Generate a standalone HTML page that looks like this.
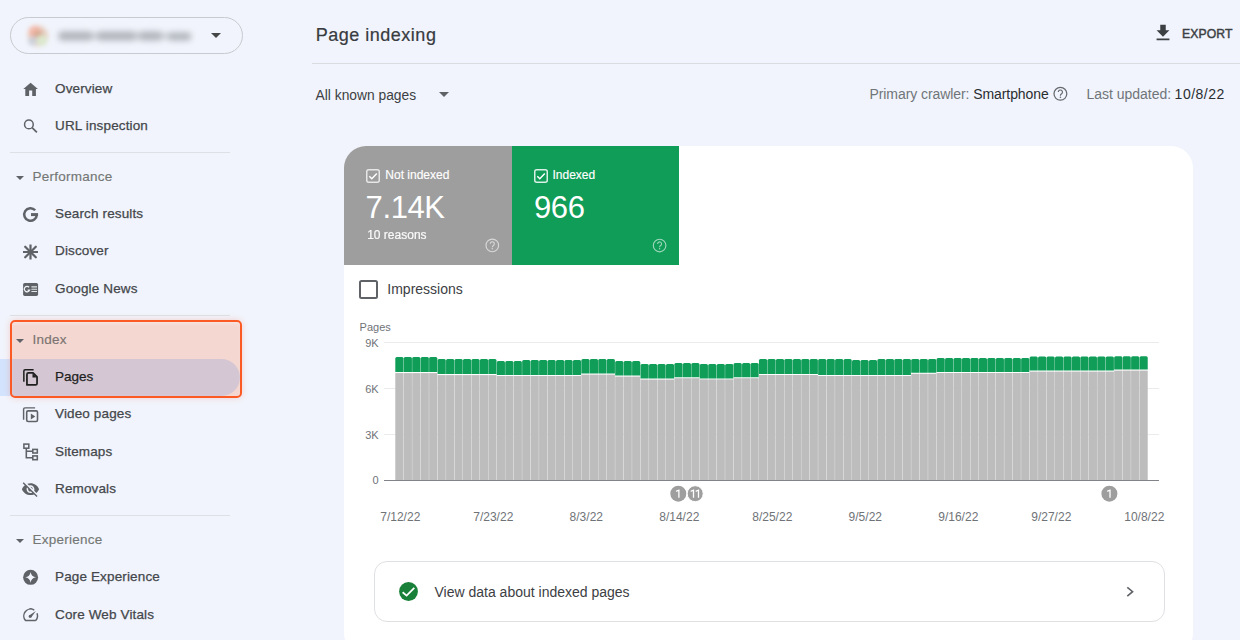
<!DOCTYPE html>
<html><head><meta charset="utf-8">
<style>
*{margin:0;padding:0;box-sizing:border-box}
html,body{width:1240px;height:640px;overflow:hidden;background:#f1f4fc;font-family:"Liberation Sans",sans-serif;position:relative}
.a{position:absolute;white-space:nowrap;line-height:1}
.nav{font-size:13.5px;color:#44474b;left:55px;letter-spacing:.14px;-webkit-text-stroke:.25px #44474b}
.sec{font-size:13.5px;color:#747775;left:32.5px;letter-spacing:.25px;-webkit-text-stroke:.15px #747775}
.ic{position:absolute;left:21px;width:20px;height:20px}
.div{position:absolute;left:10px;width:220px;height:1px;background:#dde1e6}
.tri{position:absolute;width:0;height:0;border-left:4px solid transparent;border-right:4px solid transparent;border-top:4px solid #5f6368}
</style></head><body>
<!-- property selector -->
<div class="a" style="left:10px;top:17px;width:233px;height:37px;border:1px solid #c7cace;border-radius:19px"></div>
<svg class="a" style="left:0;top:0;width:250px;height:70px" viewBox="0 0 250 70">
<defs><filter id="bl" x="-50%" y="-50%" width="200%" height="200%"><feGaussianBlur stdDeviation="2.2"/></filter><filter id="bl2" x="-30%" y="-100%" width="160%" height="300%"><feGaussianBlur stdDeviation="3"/></filter></defs>
<g filter="url(#bl)">
<circle cx="38" cy="36" r="10.5" fill="#e8d3c6"/>
<circle cx="35" cy="32" r="6.5" fill="#f2b9aa"/>
<circle cx="38.5" cy="35.5" r="5" fill="#d6a993"/>
<circle cx="42" cy="40.5" r="5.5" fill="#dce8cd"/>
<circle cx="32.5" cy="41" r="4.5" fill="#cdd1da"/>
</g>
<g filter="url(#bl2)" fill="#b0b4ba">
<rect x="90" y="33.5" width="80" height="5" fill="#c8ccd2"/>
<rect x="58.5" y="31.5" width="34" height="9" rx="3"/>
<rect x="97" y="31.5" width="39" height="9" rx="3"/>
<rect x="139" y="31.5" width="23" height="9" rx="3"/>
<rect x="168" y="32.5" width="23" height="8" rx="3"/>
</g>
</svg>
<div class="a" style="left:211px;top:33px;width:0;height:0;border-left:5px solid transparent;border-right:5px solid transparent;border-top:5px solid #444746"></div>

<!-- nav -->
<div class="a nav" style="top:81.6px">Overview</div>
<div class="a nav" style="top:118.8px">URL inspection</div>
<div class="div" style="top:152px"></div>

<div class="tri" style="left:15.5px;top:176px"></div>
<div class="a sec" style="top:170px">Performance</div>
<div class="a nav" style="top:207.1px">Search results</div>
<div class="a nav" style="top:244.4px">Discover</div>
<div class="a nav" style="top:281.6px">Google News</div>
<div class="div" style="top:315px"></div>

<!-- selected pill -->
<div class="a" style="left:0;top:359px;width:240.5px;height:37px;background:#d3e3fd;border-radius:0 18.5px 18.5px 0"></div>
<div class="a" style="left:11.7px;top:322.2px;width:228.5px;height:74.1px;background:#f4d7d0;border-radius:3px"></div>
<div class="a" style="left:11.7px;top:359px;width:228.8px;height:37px;background:#d4c7d3;border-radius:0 18.5px 18.5px 0"></div>
<div class="tri" style="left:15.5px;top:339px"></div>
<div class="a sec" style="top:332.8px;color:#7a7371;-webkit-text-stroke:.15px #7a7371">Index</div>
<div class="a nav" style="top:370px;color:#1f1f1f;letter-spacing:0;-webkit-text-stroke:.25px #1f1f1f">Pages</div>
<svg class="a" style="left:0;top:0;width:300px;height:640px" viewBox="0 0 300 640">
<path d="M23.3 89L30.6 82.7L37.9 89H35.9V95.9H32.2V90.6H29.1V95.9H25.3V89Z" fill="#5f6368"/>
<circle cx="28.9" cy="124.4" r="4.35" fill="none" stroke="#5f6368" stroke-width="1.5"/><path d="M32.1 127.6L36.9 132.4" stroke="#5f6368" stroke-width="1.7"/>
<path d="M35.18 210.28A6.3 6.3 0 1 0 36.80 214.50" fill="none" stroke="#5f6368" stroke-width="2.5"/><rect x="31" y="213.1" width="7.05" height="3" fill="#5f6368"/>
<g stroke="#5f6368" stroke-width="2.2"><path d="M30.5 244.5V259.5M23 252H38"/><path d="M25.2 246.7L35.8 257.3M35.8 246.7L25.2 257.3" stroke-linecap="round"/></g>
<rect x="23.1" y="282.9" width="15" height="13" rx="1.6" fill="#5f6368"/>
<path d="M29.1 287.2A2.75 2.75 0 1 0 29.6 290.1H27.6" fill="none" stroke="#eef0f3" stroke-width="1.3"/>
<path d="M31.4 286.9H37M31.4 289.2H37M31.4 291.5H37" stroke="#e3e5e8" stroke-width="1.1"/>
<path d="M23.85 381.7V371.1Q23.85 369.85 25.1 369.85H33.6" fill="none" stroke="#1f1f1f" stroke-width="1.5"/>
<path d="M26.95 384.9V374.4Q26.95 372.95 28.4 372.95H33.1L37.05 376.9V383.4Q37.05 384.9 35.55 384.9H28.4Q26.95 384.9 26.95 383.4Z" fill="none" stroke="#1f1f1f" stroke-width="1.75" stroke-linejoin="round"/>
<path d="M32.5 373.2V377.5H36.8Z" fill="#1f1f1f"/>
<path d="M23.6 419.7V409.3Q23.6 407.85 25.05 407.85H35.1" fill="none" stroke="#5f6368" stroke-width="1.45"/>
<rect x="26.7" y="410.9" width="10.8" height="10.6" rx="1.4" fill="none" stroke="#5f6368" stroke-width="1.6"/>
<path d="M30.8 413.4V419.5L35.3 416.45Z" fill="#5f6368"/>
<g fill="none" stroke="#5f6368" stroke-width="1.55"><rect x="23.9" y="444.1" width="4.9" height="4.1"/><rect x="32.8" y="449.4" width="4.5" height="3.6"/><rect x="32.8" y="455.9" width="4.5" height="3.8"/><path d="M26.3 448.2V457.8H32.8M26.3 451.2H32.8"/></g>
<svg x="21.1" y="479.8" width="18.8" height="18.8" viewBox="0 0 24 24"><path fill="#5f6368" d="M12 7c2.76 0 5 2.24 5 5 0 .65-.13 1.26-.36 1.83l2.92 2.92c1.51-1.26 2.7-2.89 3.43-4.75-1.73-4.39-6-7.5-11-7.5-1.4 0-2.74.25-3.98.7l2.16 2.16C10.74 7.13 11.35 7 12 7zM2 4.27l2.28 2.28.46.46A11.8 11.8 0 0 0 1 12c1.73 4.39 6 7.5 11 7.5 1.55 0 3.03-.3 4.38-.84l.42.42L19.73 22 21 20.73 3.27 3 2 4.27zM7.53 9.8l1.55 1.55c-.05.21-.08.43-.08.65 0 1.66 1.34 3 3 3 .22 0 .44-.03.65-.08l1.55 1.55c-.67.33-1.41.53-2.2.53-2.76 0-5-2.24-5-5 0-.79.2-1.53.53-2.2zm4.31-.78l3.15 3.15.02-.16c0-1.66-1.34-3-3-3l-.17.01z"/></svg>
<circle cx="30.6" cy="577.35" r="7.5" fill="#5f6368"/><path fill="#f1f4fc" d="M30.6 571.9Q31.3 576.65 36.05 577.35Q31.3 578.05 30.6 582.8Q29.9 578.05 25.15 577.35Q29.9 576.65 30.6 571.9Z"/>
<path d="M35.70 620.50H25.50A6.9 6.9 0 0 1 34.26 610.05M37.00 613.32A6.9 6.9 0 0 1 35.70 620.50" fill="none" stroke="#5f6368" stroke-width="1.5" stroke-linejoin="round"/><path d="M29.1 615.4L35.9 611.0L31.2 617.6Z" fill="#5f6368"/><circle cx="30.1" cy="616.5" r="1.45" fill="#5f6368"/><path d="M29.6 608.6h2" stroke="#5f6368" stroke-width="1"/>
</svg>


<div class="a nav" style="top:407.3px">Video pages</div>
<div class="a nav" style="top:444.6px">Sitemaps</div>
<div class="a nav" style="top:481.8px">Removals</div>
<div class="div" style="top:515px"></div>

<div class="tri" style="left:15.5px;top:539px"></div>
<div class="a sec" style="top:533.2px">Experience</div>
<div class="a nav" style="top:570.4px">Page Experience</div>
<div class="a nav" style="top:607.7px">Core Web Vitals</div>

<div class="a" style="left:9.7px;top:320.2px;width:232.5px;height:78px;border:2px solid #fb5a25;border-radius:5px;box-shadow:0 0 6px rgba(244,81,30,.22),inset 0 3px 4px -2px rgba(255,255,255,.45)"></div>
<!-- header -->
<div class="a" style="left:315.8px;top:25.6px;font-size:18px;color:#383b3f;letter-spacing:.5px;-webkit-text-stroke:.2px #383b3f">Page indexing</div>
<div class="a" style="left:312px;top:63px;width:928px;height:1px;background:#dadce0"></div>
<svg class="a" style="left:1152px;top:22px;width:22px;height:22px" viewBox="0 0 24 24"><path fill="#3c4043" d="M19 9h-4V3H9v6H5l7 7 7-7zM5 18v2h14v-2H5z"/></svg>
<div class="a" style="left:1182px;top:28px;font-size:12.2px;color:#3c4043;letter-spacing:.1px;-webkit-text-stroke:.45px #3c4043">EXPORT</div>

<div class="a" style="left:315.6px;top:88.5px;font-size:13.8px;color:#3c3f43">All known pages</div>
<div class="a" style="left:438.5px;top:92px;width:0;height:0;border-left:5.5px solid transparent;border-right:5.5px solid transparent;border-top:5.5px solid #5f6368"></div>

<div class="a" style="left:869.5px;top:86.6px;font-size:14px;color:#707479;letter-spacing:-.08px">Primary crawler:</div>
<div class="a" style="left:973.2px;top:86.6px;font-size:14px;color:#2a2d30;letter-spacing:-.08px">Smartphone</div>
<svg class="a" style="left:1050px;top:84px;width:20px;height:20px" viewBox="1050 84 20 20"><circle cx="1060.4" cy="93.8" r="6.4" fill="none" stroke="#666a6f" stroke-width="1.25"/><path d="M1058.3 92.1a2.1 2.1 0 1 1 3.3 1.75c-.8.55-1.2.9-1.2 1.9" fill="none" stroke="#666a6f" stroke-width="1.2"/><circle cx="1060.4" cy="97.3" r=".8" fill="#666a6f"/></svg>
<div class="a" style="left:1086.5px;top:86.6px;font-size:14px;color:#707479;letter-spacing:-.02px">Last updated:</div>
<div class="a" style="left:1174.6px;top:86.6px;font-size:14px;color:#2a2d30;letter-spacing:.5px">10/8/22</div>

<!-- card -->
<div class="a" style="left:344px;top:146px;width:849px;height:509px;background:#fff;border-radius:22px;overflow:hidden">
  <div class="a" style="left:0;top:0;width:167.5px;height:119px;background:#9e9e9e"></div>
  <div class="a" style="left:167.5px;top:0;width:167.5px;height:119px;background:#0f9d58"></div>
</div>
<!-- tile contents (page coords) -->
<svg class="a" style="left:366px;top:168.5px;width:14px;height:14px" viewBox="0 0 14 14"><rect x=".75" y=".75" width="12.5" height="12.5" rx="2" fill="none" stroke="#fff" stroke-opacity=".75" stroke-width="1.5"/><path d="M3.3 7.2l2.5 2.5 5-5.2" fill="none" stroke="#fff" stroke-width="1.5"/></svg>
<div class="a" style="left:385.3px;top:169.3px;font-size:12px;color:#fff;-webkit-text-stroke:.15px #fff">Not indexed</div>
<div class="a" style="left:365.6px;top:192.3px;font-size:31px;color:#fff;letter-spacing:-.4px">7.14K</div>
<div class="a" style="left:367.2px;top:228.6px;font-size:12px;color:#fff;opacity:.95;-webkit-text-stroke:.2px #fff">10 reasons</div>
<svg class="a" style="left:0;top:0;width:1240px;height:640px" viewBox="0 0 1240 640"><g opacity="0.6"><circle cx="492.3" cy="245.4" r="6.3" fill="none" stroke="#fff" stroke-width="1.15"/><path d="M490.30 243.80a2.0 2.0 0 1 1 3.1 1.65c-.75.5-1.1.85-1.1 1.75" fill="none" stroke="#fff" stroke-width="1.1"/><circle cx="492.3" cy="248.70" r=".7" fill="#fff"/></g></svg>

<svg class="a" style="left:533.5px;top:168.5px;width:14px;height:14px" viewBox="0 0 14 14"><rect x=".75" y=".75" width="12.5" height="12.5" rx="2" fill="none" stroke="#fff" stroke-opacity=".85" stroke-width="1.5"/><path d="M3.3 7.2l2.5 2.5 5-5.2" fill="none" stroke="#fff" stroke-width="1.5"/></svg>
<div class="a" style="left:552.5px;top:169.3px;font-size:12px;color:#fff;-webkit-text-stroke:.15px #fff">Indexed</div>
<div class="a" style="left:534px;top:192.3px;font-size:31px;color:#fff;letter-spacing:-.4px">966</div>
<svg class="a" style="left:0;top:0;width:1240px;height:640px" viewBox="0 0 1240 640"><g opacity="0.6"><circle cx="659.6" cy="245.5" r="6.3" fill="none" stroke="#fff" stroke-width="1.15"/><path d="M657.60 243.90a2.0 2.0 0 1 1 3.1 1.65c-.75.5-1.1.85-1.1 1.75" fill="none" stroke="#fff" stroke-width="1.1"/><circle cx="659.6" cy="248.80" r=".7" fill="#fff"/></g></svg>

<!-- impressions -->
<div class="a" style="left:359px;top:280px;width:19px;height:19px;border:2px solid #5f6368;border-radius:2.5px"></div>
<div class="a" style="left:387.3px;top:282.2px;font-size:14px;color:#3c4043">Impressions</div>

<!-- chart -->
<svg class="a" style="left:0;top:0;width:1240px;height:640px" viewBox="0 0 1240 640">
<g font-family="Liberation Sans" fill="#6f7377">
<text x="359.6" y="331" font-size="11">Pages</text>
<text x="378.7" y="347" font-size="11" text-anchor="end">9K</text>
<text x="378.7" y="392.8" font-size="11" text-anchor="end">6K</text>
<text x="378.7" y="438.6" font-size="11" text-anchor="end">3K</text>
<text x="378.7" y="484.4" font-size="11" text-anchor="end">0</text>
</g>
<g stroke="#ebebeb" stroke-width="1">
<path d="M384 342.5H1159M384 388.5H1159M384 434.5H1159"/>
</g>
<rect x="395.30" y="373.10" width="8.18" height="106.90" fill="#bdbdbd"/>
<path d="M395.30 372.10V358.60Q395.30 357.10 396.80 357.10H401.98Q403.48 357.10 403.48 358.60V372.10Z" fill="#0f9d58"/>
<rect x="403.76" y="373.10" width="8.18" height="106.90" fill="#bdbdbd"/>
<path d="M403.76 372.10V358.60Q403.76 357.10 405.26 357.10H410.43Q411.93 357.10 411.93 358.60V372.10Z" fill="#0f9d58"/>
<rect x="412.21" y="373.10" width="8.18" height="106.90" fill="#bdbdbd"/>
<path d="M412.21 372.10V358.60Q412.21 357.10 413.71 357.10H418.89Q420.39 357.10 420.39 358.60V372.10Z" fill="#0f9d58"/>
<rect x="420.67" y="373.10" width="8.18" height="106.90" fill="#bdbdbd"/>
<path d="M420.67 372.10V358.60Q420.67 357.10 422.17 357.10H427.35Q428.85 357.10 428.85 358.60V372.10Z" fill="#0f9d58"/>
<rect x="429.13" y="373.10" width="8.18" height="106.90" fill="#bdbdbd"/>
<path d="M429.13 372.10V358.60Q429.13 357.10 430.63 357.10H435.81Q437.31 357.10 437.31 358.60V372.10Z" fill="#0f9d58"/>
<rect x="437.59" y="375.10" width="8.18" height="104.90" fill="#bdbdbd"/>
<path d="M437.59 374.10V360.50Q437.59 359.00 439.09 359.00H444.26Q445.76 359.00 445.76 360.50V374.10Z" fill="#0f9d58"/>
<rect x="446.04" y="375.10" width="8.18" height="104.90" fill="#bdbdbd"/>
<path d="M446.04 374.10V360.50Q446.04 359.00 447.54 359.00H452.72Q454.22 359.00 454.22 360.50V374.10Z" fill="#0f9d58"/>
<rect x="454.50" y="375.10" width="8.18" height="104.90" fill="#bdbdbd"/>
<path d="M454.50 374.10V360.50Q454.50 359.00 456.00 359.00H461.18Q462.68 359.00 462.68 360.50V374.10Z" fill="#0f9d58"/>
<rect x="462.96" y="375.10" width="8.18" height="104.90" fill="#bdbdbd"/>
<path d="M462.96 374.10V360.50Q462.96 359.00 464.46 359.00H469.64Q471.14 359.00 471.14 360.50V374.10Z" fill="#0f9d58"/>
<rect x="471.42" y="375.10" width="8.18" height="104.90" fill="#bdbdbd"/>
<path d="M471.42 374.10V360.50Q471.42 359.00 472.92 359.00H478.09Q479.59 359.00 479.59 360.50V374.10Z" fill="#0f9d58"/>
<rect x="479.87" y="375.10" width="8.18" height="104.90" fill="#bdbdbd"/>
<path d="M479.87 374.10V360.50Q479.87 359.00 481.37 359.00H486.55Q488.05 359.00 488.05 360.50V374.10Z" fill="#0f9d58"/>
<rect x="488.33" y="375.10" width="8.18" height="104.90" fill="#bdbdbd"/>
<path d="M488.33 374.10V360.50Q488.33 359.00 489.83 359.00H495.01Q496.51 359.00 496.51 360.50V374.10Z" fill="#0f9d58"/>
<rect x="496.79" y="376.00" width="8.18" height="104.00" fill="#bdbdbd"/>
<path d="M496.79 375.00V362.60Q496.79 361.10 498.29 361.10H503.46Q504.96 361.10 504.96 362.60V375.00Z" fill="#0f9d58"/>
<rect x="505.24" y="376.00" width="8.18" height="104.00" fill="#bdbdbd"/>
<path d="M505.24 375.00V362.60Q505.24 361.10 506.74 361.10H511.92Q513.42 361.10 513.42 362.60V375.00Z" fill="#0f9d58"/>
<rect x="513.70" y="376.00" width="8.18" height="104.00" fill="#bdbdbd"/>
<path d="M513.70 375.00V362.60Q513.70 361.10 515.20 361.10H520.38Q521.88 361.10 521.88 362.60V375.00Z" fill="#0f9d58"/>
<rect x="522.16" y="376.00" width="8.18" height="104.00" fill="#bdbdbd"/>
<path d="M522.16 375.00V361.60Q522.16 360.10 523.66 360.10H528.84Q530.34 360.10 530.34 361.60V375.00Z" fill="#0f9d58"/>
<rect x="530.62" y="376.00" width="8.18" height="104.00" fill="#bdbdbd"/>
<path d="M530.62 375.00V361.60Q530.62 360.10 532.12 360.10H537.29Q538.79 360.10 538.79 361.60V375.00Z" fill="#0f9d58"/>
<rect x="539.07" y="376.00" width="8.18" height="104.00" fill="#bdbdbd"/>
<path d="M539.07 375.00V361.60Q539.07 360.10 540.57 360.10H545.75Q547.25 360.10 547.25 361.60V375.00Z" fill="#0f9d58"/>
<rect x="547.53" y="376.00" width="8.18" height="104.00" fill="#bdbdbd"/>
<path d="M547.53 375.00V361.60Q547.53 360.10 549.03 360.10H554.21Q555.71 360.10 555.71 361.60V375.00Z" fill="#0f9d58"/>
<rect x="555.99" y="376.00" width="8.18" height="104.00" fill="#bdbdbd"/>
<path d="M555.99 375.00V361.60Q555.99 360.10 557.49 360.10H562.67Q564.17 360.10 564.17 361.60V375.00Z" fill="#0f9d58"/>
<rect x="564.45" y="376.00" width="8.18" height="104.00" fill="#bdbdbd"/>
<path d="M564.45 375.00V361.60Q564.45 360.10 565.95 360.10H571.12Q572.62 360.10 572.62 361.60V375.00Z" fill="#0f9d58"/>
<rect x="572.90" y="376.00" width="8.18" height="104.00" fill="#bdbdbd"/>
<path d="M572.90 375.00V361.60Q572.90 360.10 574.40 360.10H579.58Q581.08 360.10 581.08 361.60V375.00Z" fill="#0f9d58"/>
<rect x="581.36" y="374.60" width="8.18" height="105.40" fill="#bdbdbd"/>
<path d="M581.36 373.60V360.50Q581.36 359.00 582.86 359.00H588.04Q589.54 359.00 589.54 360.50V373.60Z" fill="#0f9d58"/>
<rect x="589.82" y="374.60" width="8.18" height="105.40" fill="#bdbdbd"/>
<path d="M589.82 373.60V360.50Q589.82 359.00 591.32 359.00H596.50Q598.00 359.00 598.00 360.50V373.60Z" fill="#0f9d58"/>
<rect x="598.28" y="374.60" width="8.18" height="105.40" fill="#bdbdbd"/>
<path d="M598.28 373.60V360.50Q598.28 359.00 599.78 359.00H604.95Q606.45 359.00 606.45 360.50V373.60Z" fill="#0f9d58"/>
<rect x="606.73" y="374.60" width="8.18" height="105.40" fill="#bdbdbd"/>
<path d="M606.73 373.60V360.50Q606.73 359.00 608.23 359.00H613.41Q614.91 359.00 614.91 360.50V373.60Z" fill="#0f9d58"/>
<rect x="615.19" y="376.60" width="8.18" height="103.40" fill="#bdbdbd"/>
<path d="M615.19 375.60V362.40Q615.19 360.90 616.69 360.90H621.87Q623.37 360.90 623.37 362.40V375.60Z" fill="#0f9d58"/>
<rect x="623.65" y="376.60" width="8.18" height="103.40" fill="#bdbdbd"/>
<path d="M623.65 375.60V362.40Q623.65 360.90 625.15 360.90H630.32Q631.82 360.90 631.82 362.40V375.60Z" fill="#0f9d58"/>
<rect x="632.10" y="376.60" width="8.18" height="103.40" fill="#bdbdbd"/>
<path d="M632.10 375.60V362.40Q632.10 360.90 633.60 360.90H638.78Q640.28 360.90 640.28 362.40V375.60Z" fill="#0f9d58"/>
<rect x="640.56" y="379.60" width="8.18" height="100.40" fill="#bdbdbd"/>
<path d="M640.56 378.60V365.40Q640.56 363.90 642.06 363.90H647.24Q648.74 363.90 648.74 365.40V378.60Z" fill="#0f9d58"/>
<rect x="649.02" y="379.60" width="8.18" height="100.40" fill="#bdbdbd"/>
<path d="M649.02 378.60V365.40Q649.02 363.90 650.52 363.90H655.70Q657.20 363.90 657.20 365.40V378.60Z" fill="#0f9d58"/>
<rect x="657.48" y="379.60" width="8.18" height="100.40" fill="#bdbdbd"/>
<path d="M657.48 378.60V365.40Q657.48 363.90 658.98 363.90H664.15Q665.65 363.90 665.65 365.40V378.60Z" fill="#0f9d58"/>
<rect x="665.93" y="379.60" width="8.18" height="100.40" fill="#bdbdbd"/>
<path d="M665.93 378.60V365.40Q665.93 363.90 667.43 363.90H672.61Q674.11 363.90 674.11 365.40V378.60Z" fill="#0f9d58"/>
<rect x="674.39" y="378.20" width="8.18" height="101.80" fill="#bdbdbd"/>
<path d="M674.39 377.20V364.40Q674.39 362.90 675.89 362.90H681.07Q682.57 362.90 682.57 364.40V377.20Z" fill="#0f9d58"/>
<rect x="682.85" y="378.20" width="8.18" height="101.80" fill="#bdbdbd"/>
<path d="M682.85 377.20V364.40Q682.85 362.90 684.35 362.90H689.53Q691.03 362.90 691.03 364.40V377.20Z" fill="#0f9d58"/>
<rect x="691.31" y="378.20" width="8.18" height="101.80" fill="#bdbdbd"/>
<path d="M691.31 377.20V364.40Q691.31 362.90 692.81 362.90H697.98Q699.48 362.90 699.48 364.40V377.20Z" fill="#0f9d58"/>
<rect x="699.76" y="379.40" width="8.18" height="100.60" fill="#bdbdbd"/>
<path d="M699.76 378.40V365.40Q699.76 363.90 701.26 363.90H706.44Q707.94 363.90 707.94 365.40V378.40Z" fill="#0f9d58"/>
<rect x="708.22" y="379.40" width="8.18" height="100.60" fill="#bdbdbd"/>
<path d="M708.22 378.40V365.40Q708.22 363.90 709.72 363.90H714.90Q716.40 363.90 716.40 365.40V378.40Z" fill="#0f9d58"/>
<rect x="716.68" y="379.40" width="8.18" height="100.60" fill="#bdbdbd"/>
<path d="M716.68 378.40V365.40Q716.68 363.90 718.18 363.90H723.35Q724.85 363.90 724.85 365.40V378.40Z" fill="#0f9d58"/>
<rect x="725.13" y="379.40" width="8.18" height="100.60" fill="#bdbdbd"/>
<path d="M725.13 378.40V365.40Q725.13 363.90 726.63 363.90H731.81Q733.31 363.90 733.31 365.40V378.40Z" fill="#0f9d58"/>
<rect x="733.59" y="378.20" width="8.18" height="101.80" fill="#bdbdbd"/>
<path d="M733.59 377.20V364.40Q733.59 362.90 735.09 362.90H740.27Q741.77 362.90 741.77 364.40V377.20Z" fill="#0f9d58"/>
<rect x="742.05" y="378.20" width="8.18" height="101.80" fill="#bdbdbd"/>
<path d="M742.05 377.20V364.40Q742.05 362.90 743.55 362.90H748.73Q750.23 362.90 750.23 364.40V377.20Z" fill="#0f9d58"/>
<rect x="750.51" y="378.20" width="8.18" height="101.80" fill="#bdbdbd"/>
<path d="M750.51 377.20V364.40Q750.51 362.90 752.01 362.90H757.18Q758.68 362.90 758.68 364.40V377.20Z" fill="#0f9d58"/>
<rect x="758.96" y="375.00" width="8.18" height="105.00" fill="#bdbdbd"/>
<path d="M758.96 374.00V360.50Q758.96 359.00 760.46 359.00H765.64Q767.14 359.00 767.14 360.50V374.00Z" fill="#0f9d58"/>
<rect x="767.42" y="375.00" width="8.18" height="105.00" fill="#bdbdbd"/>
<path d="M767.42 374.00V360.50Q767.42 359.00 768.92 359.00H774.10Q775.60 359.00 775.60 360.50V374.00Z" fill="#0f9d58"/>
<rect x="775.88" y="375.00" width="8.18" height="105.00" fill="#bdbdbd"/>
<path d="M775.88 374.00V360.50Q775.88 359.00 777.38 359.00H782.56Q784.06 359.00 784.06 360.50V374.00Z" fill="#0f9d58"/>
<rect x="784.34" y="375.00" width="8.18" height="105.00" fill="#bdbdbd"/>
<path d="M784.34 374.00V360.50Q784.34 359.00 785.84 359.00H791.01Q792.51 359.00 792.51 360.50V374.00Z" fill="#0f9d58"/>
<rect x="792.79" y="375.00" width="8.18" height="105.00" fill="#bdbdbd"/>
<path d="M792.79 374.00V360.50Q792.79 359.00 794.29 359.00H799.47Q800.97 359.00 800.97 360.50V374.00Z" fill="#0f9d58"/>
<rect x="801.25" y="375.00" width="8.18" height="105.00" fill="#bdbdbd"/>
<path d="M801.25 374.00V360.50Q801.25 359.00 802.75 359.00H807.93Q809.43 359.00 809.43 360.50V374.00Z" fill="#0f9d58"/>
<rect x="809.71" y="375.00" width="8.18" height="105.00" fill="#bdbdbd"/>
<path d="M809.71 374.00V360.50Q809.71 359.00 811.21 359.00H816.39Q817.89 359.00 817.89 360.50V374.00Z" fill="#0f9d58"/>
<rect x="818.17" y="376.00" width="8.18" height="104.00" fill="#bdbdbd"/>
<path d="M818.17 375.00V360.50Q818.17 359.00 819.67 359.00H824.84Q826.34 359.00 826.34 360.50V375.00Z" fill="#0f9d58"/>
<rect x="826.62" y="376.00" width="8.18" height="104.00" fill="#bdbdbd"/>
<path d="M826.62 375.00V360.50Q826.62 359.00 828.12 359.00H833.30Q834.80 359.00 834.80 360.50V375.00Z" fill="#0f9d58"/>
<rect x="835.08" y="376.00" width="8.18" height="104.00" fill="#bdbdbd"/>
<path d="M835.08 375.00V360.50Q835.08 359.00 836.58 359.00H841.76Q843.26 359.00 843.26 360.50V375.00Z" fill="#0f9d58"/>
<rect x="843.54" y="376.00" width="8.18" height="104.00" fill="#bdbdbd"/>
<path d="M843.54 375.00V360.50Q843.54 359.00 845.04 359.00H850.21Q851.71 359.00 851.71 360.50V375.00Z" fill="#0f9d58"/>
<rect x="851.99" y="376.00" width="8.18" height="104.00" fill="#bdbdbd"/>
<path d="M851.99 375.00V361.60Q851.99 360.10 853.49 360.10H858.67Q860.17 360.10 860.17 361.60V375.00Z" fill="#0f9d58"/>
<rect x="860.45" y="376.00" width="8.18" height="104.00" fill="#bdbdbd"/>
<path d="M860.45 375.00V361.60Q860.45 360.10 861.95 360.10H867.13Q868.63 360.10 868.63 361.60V375.00Z" fill="#0f9d58"/>
<rect x="868.91" y="376.00" width="8.18" height="104.00" fill="#bdbdbd"/>
<path d="M868.91 375.00V361.60Q868.91 360.10 870.41 360.10H875.59Q877.09 360.10 877.09 361.60V375.00Z" fill="#0f9d58"/>
<rect x="877.37" y="376.00" width="8.18" height="104.00" fill="#bdbdbd"/>
<path d="M877.37 375.00V360.50Q877.37 359.00 878.87 359.00H884.04Q885.54 359.00 885.54 360.50V375.00Z" fill="#0f9d58"/>
<rect x="885.82" y="376.00" width="8.18" height="104.00" fill="#bdbdbd"/>
<path d="M885.82 375.00V360.50Q885.82 359.00 887.32 359.00H892.50Q894.00 359.00 894.00 360.50V375.00Z" fill="#0f9d58"/>
<rect x="894.28" y="376.00" width="8.18" height="104.00" fill="#bdbdbd"/>
<path d="M894.28 375.00V360.50Q894.28 359.00 895.78 359.00H900.96Q902.46 359.00 902.46 360.50V375.00Z" fill="#0f9d58"/>
<rect x="902.74" y="376.00" width="8.18" height="104.00" fill="#bdbdbd"/>
<path d="M902.74 375.00V360.50Q902.74 359.00 904.24 359.00H909.42Q910.92 359.00 910.92 360.50V375.00Z" fill="#0f9d58"/>
<rect x="911.20" y="373.80" width="8.18" height="106.20" fill="#bdbdbd"/>
<path d="M911.20 372.80V360.50Q911.20 359.00 912.70 359.00H917.87Q919.37 359.00 919.37 360.50V372.80Z" fill="#0f9d58"/>
<rect x="919.65" y="373.80" width="8.18" height="106.20" fill="#bdbdbd"/>
<path d="M919.65 372.80V360.50Q919.65 359.00 921.15 359.00H926.33Q927.83 359.00 927.83 360.50V372.80Z" fill="#0f9d58"/>
<rect x="928.11" y="373.80" width="8.18" height="106.20" fill="#bdbdbd"/>
<path d="M928.11 372.80V360.50Q928.11 359.00 929.61 359.00H934.79Q936.29 359.00 936.29 360.50V372.80Z" fill="#0f9d58"/>
<rect x="936.57" y="373.00" width="8.18" height="107.00" fill="#bdbdbd"/>
<path d="M936.57 372.00V359.60Q936.57 358.10 938.07 358.10H943.24Q944.74 358.10 944.74 359.60V372.00Z" fill="#0f9d58"/>
<rect x="945.02" y="373.00" width="8.18" height="107.00" fill="#bdbdbd"/>
<path d="M945.02 372.00V359.60Q945.02 358.10 946.52 358.10H951.70Q953.20 358.10 953.20 359.60V372.00Z" fill="#0f9d58"/>
<rect x="953.48" y="373.00" width="8.18" height="107.00" fill="#bdbdbd"/>
<path d="M953.48 372.00V359.60Q953.48 358.10 954.98 358.10H960.16Q961.66 358.10 961.66 359.60V372.00Z" fill="#0f9d58"/>
<rect x="961.94" y="373.00" width="8.18" height="107.00" fill="#bdbdbd"/>
<path d="M961.94 372.00V359.60Q961.94 358.10 963.44 358.10H968.62Q970.12 358.10 970.12 359.60V372.00Z" fill="#0f9d58"/>
<rect x="970.40" y="373.00" width="8.18" height="107.00" fill="#bdbdbd"/>
<path d="M970.40 372.00V359.60Q970.40 358.10 971.90 358.10H977.07Q978.57 358.10 978.57 359.60V372.00Z" fill="#0f9d58"/>
<rect x="978.85" y="373.00" width="8.18" height="107.00" fill="#bdbdbd"/>
<path d="M978.85 372.00V359.60Q978.85 358.10 980.35 358.10H985.53Q987.03 358.10 987.03 359.60V372.00Z" fill="#0f9d58"/>
<rect x="987.31" y="373.00" width="8.18" height="107.00" fill="#bdbdbd"/>
<path d="M987.31 372.00V359.60Q987.31 358.10 988.81 358.10H993.99Q995.49 358.10 995.49 359.60V372.00Z" fill="#0f9d58"/>
<rect x="995.77" y="373.00" width="8.18" height="107.00" fill="#bdbdbd"/>
<path d="M995.77 372.00V359.60Q995.77 358.10 997.27 358.10H1002.45Q1003.95 358.10 1003.95 359.60V372.00Z" fill="#0f9d58"/>
<rect x="1004.23" y="373.00" width="8.18" height="107.00" fill="#bdbdbd"/>
<path d="M1004.23 372.00V359.60Q1004.23 358.10 1005.73 358.10H1010.90Q1012.40 358.10 1012.40 359.60V372.00Z" fill="#0f9d58"/>
<rect x="1012.68" y="373.00" width="8.18" height="107.00" fill="#bdbdbd"/>
<path d="M1012.68 372.00V359.60Q1012.68 358.10 1014.18 358.10H1019.36Q1020.86 358.10 1020.86 359.60V372.00Z" fill="#0f9d58"/>
<rect x="1021.14" y="373.00" width="8.18" height="107.00" fill="#bdbdbd"/>
<path d="M1021.14 372.00V359.60Q1021.14 358.10 1022.64 358.10H1027.82Q1029.32 358.10 1029.32 359.60V372.00Z" fill="#0f9d58"/>
<rect x="1029.60" y="371.60" width="8.18" height="108.40" fill="#bdbdbd"/>
<path d="M1029.60 370.60V357.90Q1029.60 356.40 1031.10 356.40H1036.28Q1037.78 356.40 1037.78 357.90V370.60Z" fill="#0f9d58"/>
<rect x="1038.06" y="371.60" width="8.18" height="108.40" fill="#bdbdbd"/>
<path d="M1038.06 370.60V357.90Q1038.06 356.40 1039.56 356.40H1044.73Q1046.23 356.40 1046.23 357.90V370.60Z" fill="#0f9d58"/>
<rect x="1046.51" y="371.60" width="8.18" height="108.40" fill="#bdbdbd"/>
<path d="M1046.51 370.60V357.90Q1046.51 356.40 1048.01 356.40H1053.19Q1054.69 356.40 1054.69 357.90V370.60Z" fill="#0f9d58"/>
<rect x="1054.97" y="371.60" width="8.18" height="108.40" fill="#bdbdbd"/>
<path d="M1054.97 370.60V357.90Q1054.97 356.40 1056.47 356.40H1061.65Q1063.15 356.40 1063.15 357.90V370.60Z" fill="#0f9d58"/>
<rect x="1063.43" y="371.60" width="8.18" height="108.40" fill="#bdbdbd"/>
<path d="M1063.43 370.60V357.90Q1063.43 356.40 1064.93 356.40H1070.10Q1071.60 356.40 1071.60 357.90V370.60Z" fill="#0f9d58"/>
<rect x="1071.88" y="371.60" width="8.18" height="108.40" fill="#bdbdbd"/>
<path d="M1071.88 370.60V357.90Q1071.88 356.40 1073.38 356.40H1078.56Q1080.06 356.40 1080.06 357.90V370.60Z" fill="#0f9d58"/>
<rect x="1080.34" y="371.60" width="8.18" height="108.40" fill="#bdbdbd"/>
<path d="M1080.34 370.60V357.90Q1080.34 356.40 1081.84 356.40H1087.02Q1088.52 356.40 1088.52 357.90V370.60Z" fill="#0f9d58"/>
<rect x="1088.80" y="371.60" width="8.18" height="108.40" fill="#bdbdbd"/>
<path d="M1088.80 370.60V357.90Q1088.80 356.40 1090.30 356.40H1095.48Q1096.98 356.40 1096.98 357.90V370.60Z" fill="#0f9d58"/>
<rect x="1097.26" y="371.60" width="8.18" height="108.40" fill="#bdbdbd"/>
<path d="M1097.26 370.60V357.90Q1097.26 356.40 1098.76 356.40H1103.93Q1105.43 356.40 1105.43 357.90V370.60Z" fill="#0f9d58"/>
<rect x="1105.71" y="371.60" width="8.18" height="108.40" fill="#bdbdbd"/>
<path d="M1105.71 370.60V357.90Q1105.71 356.40 1107.21 356.40H1112.39Q1113.89 356.40 1113.89 357.90V370.60Z" fill="#0f9d58"/>
<rect x="1114.17" y="370.60" width="8.18" height="109.40" fill="#bdbdbd"/>
<path d="M1114.17 369.60V357.80Q1114.17 356.30 1115.67 356.30H1120.85Q1122.35 356.30 1122.35 357.80V369.60Z" fill="#0f9d58"/>
<rect x="1122.63" y="370.60" width="8.18" height="109.40" fill="#bdbdbd"/>
<path d="M1122.63 369.60V357.80Q1122.63 356.30 1124.13 356.30H1129.31Q1130.81 356.30 1130.81 357.80V369.60Z" fill="#0f9d58"/>
<rect x="1131.09" y="370.60" width="8.18" height="109.40" fill="#bdbdbd"/>
<path d="M1131.09 369.60V357.80Q1131.09 356.30 1132.59 356.30H1137.76Q1139.26 356.30 1139.26 357.80V369.60Z" fill="#0f9d58"/>
<rect x="1139.54" y="370.60" width="8.18" height="109.40" fill="#bdbdbd"/>
<path d="M1139.54 369.60V357.80Q1139.54 356.30 1141.04 356.30H1146.22Q1147.72 356.30 1147.72 357.80V369.60Z" fill="#0f9d58"/>
<path d="M384 480.5H1159" stroke="#808488" stroke-width="1"/>
<g font-family="Liberation Sans" font-size="12" fill="#6f7377" text-anchor="middle">
<text x="400.3" y="520.5">7/12/22</text>
<text x="493.3" y="520.5">7/23/22</text>
<text x="586.3" y="520.5">8/3/22</text>
<text x="679.3" y="520.5">8/14/22</text>
<text x="772.3" y="520.5">8/25/22</text>
<text x="865.3" y="520.5">9/5/22</text>
<text x="958.3" y="520.5">9/16/22</text>
<text x="1051.3" y="520.5">9/27/22</text>
<text x="1144.3" y="520.5">10/8/22</text>
</g>
<g fill="#9e9e9e"><circle cx="678.3" cy="493.7" r="8"/><circle cx="695.2" cy="493.7" r="8" stroke="#fff" stroke-width="1"/><circle cx="1109.4" cy="493.7" r="8"/></g>
<g><path d="M678.90 489.6V497.7M679.00 490.0L676.10 491.3" stroke="#fff" stroke-width="1.3" fill="none"/><path d="M693.50 489.6V497.7M693.60 490.0L690.70 491.3" stroke="#fff" stroke-width="1.3" fill="none"/><path d="M698.50 489.6V497.7M698.60 490.0L695.70 491.3" stroke="#fff" stroke-width="1.3" fill="none"/><path d="M1110.00 489.6V497.7M1110.10 490.0L1107.20 491.3" stroke="#fff" stroke-width="1.3" fill="none"/></g>
</svg>

<!-- bottom link card -->
<div class="a" style="left:374px;top:561px;width:791px;height:61px;border:1px solid #dfe0e3;border-radius:13px"></div>
<svg class="a" style="left:0;top:0;width:1240px;height:640px" viewBox="0 0 1240 640"><circle cx="408.5" cy="591.5" r="9.4" fill="#188038"/><path d="M402.6 592.2L406.6 595.6L414.3 587.8" fill="none" stroke="#fff" stroke-width="1.8"/></svg>
<div class="a" style="left:434.5px;top:584.6px;font-size:14px;color:#3c4043">View data about indexed pages</div>
<svg class="a" style="left:0;top:0;width:1240px;height:640px" viewBox="0 0 1240 640"><path d="M1127.3 587.3L1132.6 591.7L1127.3 596.1" fill="none" stroke="#5f6368" stroke-width="1.6"/></svg>
</body></html>
